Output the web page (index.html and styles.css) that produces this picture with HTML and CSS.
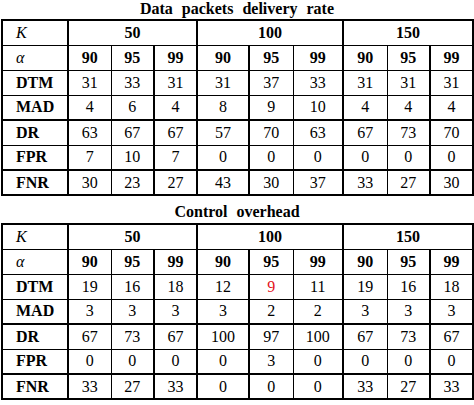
FILE: index.html
```
<!DOCTYPE html>
<html>
<head>
<meta charset="utf-8">
<link rel="stylesheet" href="styles.css">
</head>
<body>
<div class="page">
  <div class="title t1">Data packets delivery rate</div>
  <table class="grid">
    <colgroup>
      <col class="w0"><col class="w1"><col class="w2"><col class="w3"><col class="w4"><col class="w5"><col class="w6"><col class="w7"><col class="w8"><col class="w9">
    </colgroup>
    <tr class="thick">
      <td class="lab"><i>K</i></td>
      <td colspan="3" class="b tl">50</td>
      <td colspan="3" class="b tl">100</td>
      <td colspan="3" class="b tl tr">150</td>
    </tr>
    <tr>
      <td class="lab"><i>α</i></td>
      <td class="b tl">90</td><td class="b">95</td><td class="b tl">99</td>
      <td class="b tl">90</td><td class="b tl">95</td><td class="b">99</td>
      <td class="b tl">90</td><td class="b">95</td><td class="b tl tr">99</td>
    </tr>
    <tr>
      <td class="lab b">DTM</td>
      <td class="tl">31</td><td>33</td><td class="tl">31</td>
      <td class="tl">31</td><td class="tl">37</td><td>33</td>
      <td class="tl">31</td><td>31</td><td class="tl tr">31</td>
    </tr>
    <tr>
      <td class="lab b">MAD</td>
      <td class="tl">4</td><td>6</td><td class="tl">4</td>
      <td class="tl">8</td><td class="tl">9</td><td>10</td>
      <td class="tl">4</td><td>4</td><td class="tl tr">4</td>
    </tr>
    <tr class="thick">
      <td class="lab b">DR</td>
      <td class="tl">63</td><td>67</td><td class="tl">67</td>
      <td class="tl">57</td><td class="tl">70</td><td>63</td>
      <td class="tl">67</td><td>73</td><td class="tl tr">70</td>
    </tr>
    <tr>
      <td class="lab b">FPR</td>
      <td class="tl">7</td><td>10</td><td class="tl">7</td>
      <td class="tl">0</td><td class="tl">0</td><td>0</td>
      <td class="tl">0</td><td>0</td><td class="tl tr">0</td>
    </tr>
    <tr class="thick bot">
      <td class="lab b">FNR</td>
      <td class="tl">30</td><td>23</td><td class="tl">27</td>
      <td class="tl">43</td><td class="tl">30</td><td>37</td>
      <td class="tl">33</td><td>27</td><td class="tl tr">30</td>
    </tr>
  </table>

  <div class="title t2">Control overhead</div>
  <table class="grid">
    <colgroup>
      <col class="w0"><col class="w1"><col class="w2"><col class="w3"><col class="w4"><col class="w5"><col class="w6"><col class="w7"><col class="w8"><col class="w9">
    </colgroup>
    <tr class="thick">
      <td class="lab"><i>K</i></td>
      <td colspan="3" class="b tl">50</td>
      <td colspan="3" class="b tl">100</td>
      <td colspan="3" class="b tl tr">150</td>
    </tr>
    <tr>
      <td class="lab"><i>α</i></td>
      <td class="b tl">90</td><td class="b">95</td><td class="b tl">99</td>
      <td class="b tl">90</td><td class="b tl">95</td><td class="b">99</td>
      <td class="b tl">90</td><td class="b">95</td><td class="b tl tr">99</td>
    </tr>
    <tr>
      <td class="lab b">DTM</td>
      <td class="tl">19</td><td>16</td><td class="tl">18</td>
      <td class="tl">12</td><td class="tl red">9</td><td>11</td>
      <td class="tl">19</td><td>16</td><td class="tl tr">18</td>
    </tr>
    <tr>
      <td class="lab b">MAD</td>
      <td class="tl">3</td><td>3</td><td class="tl">3</td>
      <td class="tl">3</td><td class="tl">2</td><td>2</td>
      <td class="tl">3</td><td>3</td><td class="tl tr">3</td>
    </tr>
    <tr class="thick">
      <td class="lab b">DR</td>
      <td class="tl">67</td><td>73</td><td class="tl">67</td>
      <td class="tl">100</td><td class="tl">97</td><td>100</td>
      <td class="tl">67</td><td>73</td><td class="tl tr">67</td>
    </tr>
    <tr>
      <td class="lab b">FPR</td>
      <td class="tl">0</td><td>0</td><td class="tl">0</td>
      <td class="tl">0</td><td class="tl">3</td><td>0</td>
      <td class="tl">0</td><td>0</td><td class="tl tr">0</td>
    </tr>
    <tr class="thick bot">
      <td class="lab b">FNR</td>
      <td class="tl">33</td><td>27</td><td class="tl">33</td>
      <td class="tl">0</td><td class="tl">0</td><td>0</td>
      <td class="tl">33</td><td>27</td><td class="tl tr">33</td>
    </tr>
  </table>
</div>
</body>
</html>
```
FILE: styles.css
```
html, body {
  margin: 0;
  padding: 0;
  background: #fff;
}
.page {
  width: 474px;
  font-family: "Liberation Serif", "Times New Roman", serif;
  color: #000;
}
.title {
  font-weight: bold;
  font-size: 16px;
  word-spacing: 5px;
  text-align: center;
  line-height: 18px;
}
.t1 {
  height: 19px;
}
.t2 {
  height: 20px;
  padding-top: 7px;
}
.grid {
  border-collapse: collapse;
  table-layout: fixed;
  margin-left: 1px;
  width: 472px;
  font-size: 16px;
}
.grid td {
  border: 1px solid #000;
  height: 25px;
  box-sizing: border-box;
  padding: 0;
  text-align: center;
  vertical-align: middle;
  line-height: 18px;
}
.grid tr.thick td {
  border-top-width: 2px;
}
.grid tr.bot td {
  border-bottom-width: 2px;
}
.grid td.lab {
  text-align: left;
  padding-left: 13px;
  border-left-width: 2px;
  border-right-width: 2px;
}
.grid td.tl {
  border-left-width: 2px;
}
.grid td.tr {
  border-right-width: 2px;
}
.b {
  font-weight: bold;
}
.red {
  color: #e3131b;
}
.w0 { width: 66px; }
.w1 { width: 43px; }
.w2 { width: 43px; }
.w3 { width: 43px; }
.w4 { width: 52px; }
.w5 { width: 44px; }
.w6 { width: 50px; }
.w7 { width: 44px; }
.w8 { width: 43px; }
.w9 { width: 43px; }
```
